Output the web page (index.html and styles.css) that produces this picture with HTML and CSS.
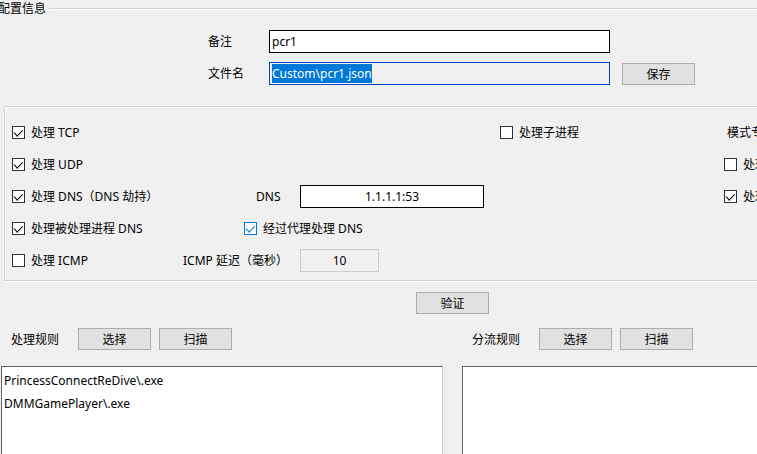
FILE: index.html
```html
<!DOCTYPE html>
<html lang="zh-CN">
<head>
    <meta charset="UTF-8">
    <title>配置信息</title>
    <link rel="stylesheet" href="styles.css">
</head>
<body>
    <!-- 配置信息 -->
    <div class="group-head">
        <span class="group-title">配置信息</span>
        <span class="group-line"></span>
    </div>

    <div class="info-grid">
        <span class="label">备注</span>
        <div class="textbox">pcr1</div>
        <span></span>

        <span class="label">文件名</span>
        <div class="textbox readonly focus"><span class="selected">Custom\pcr1.json</span></div>
        <button class="btn">保存</button>
    </div>

    <!-- 选项 -->
    <div class="options-box">
        <div class="options-grid">
            <label class="check c1"><span class="box on"></span>处理 TCP</label>
            <label class="check c6"><span class="box"></span>处理子进程</label>
            <span class="plain c7 shift">模式专用</span>

            <label class="check c1"><span class="box on"></span>处理 UDP</label>
            <label class="check c7"><span class="box"></span>处理</label>

            <label class="check c1"><span class="box on"></span>处理 DNS（DNS 劫持）</label>
            <span class="plain c4">DNS</span>
            <div class="textbox center c5 dns">1.1.1.1:53</div>
            <label class="check c7"><span class="box on"></span>处理</label>

            <label class="check c1"><span class="box on"></span>处理被处理进程 DNS</label>
            <label class="check c3"><span class="box on blue"></span>经过代理处理 DNS</label>

            <label class="check c1"><span class="box"></span>处理 ICMP</label>
            <span class="plain c2">ICMP 延迟（毫秒）</span>
            <div class="textbox center disabled c5 icmp">10</div>
        </div>
    </div>

    <div class="verify-row">
        <button class="btn">验证</button>
    </div>

    <!-- 规则 -->
    <div class="rules">
        <div class="rule-col">
            <div class="rule-head">
                <span class="rule-label">处理规则</span>
                <button class="btn">选择</button>
                <button class="btn">扫描</button>
            </div>
            <div class="list-box">
                <div class="list-item">PrincessConnectReDive\.exe</div>
                <div class="list-item">DMMGamePlayer\.exe</div>
            </div>
        </div>
        <div class="rule-col right">
            <div class="rule-head">
                <span class="rule-label">分流规则</span>
                <button class="btn">选择</button>
                <button class="btn">扫描</button>
            </div>
            <div class="list-box wide"></div>
        </div>
    </div>
</body>
</html>
```

FILE: styles.css
```css
* {
    margin: 0;
    padding: 0;
    box-sizing: border-box;
}

body {
    font-family: 'Noto Sans', 'Noto Sans CJK SC', sans-serif;
    font-size: 12px;
    color: #000;
    background: #f0f0f0;
    width: 757px;
    height: 454px;
    overflow: hidden;
}

/* 分组标题 */
.group-head {
    display: flex;
    align-items: center;
    height: 17px;
    margin-left: -2px;
}

.group-title {
    line-height: 17px;
    padding-right: 3px;
}

.group-line {
    flex: 1;
    height: 2px;
    margin-top: 1px;
    border-top: 1px solid #d5d5d5;
    border-bottom: 1px solid #fff;
}

.info-grid {
    display: grid;
    grid-template-columns: 49px 341px 73px;
    column-gap: 12px;
    row-gap: 9px;
    align-items: center;
    padding-left: 208px;
    margin-top: 13px;
}

.label {
    line-height: 23px;
}

.textbox {
    height: 23px;
    line-height: 21px;
    padding: 0 2px;
    background: #fff;
    border: 1px solid #000;
    white-space: nowrap;
    overflow: hidden;
}

.textbox.readonly {
    background: #f0f0f0;
}

.textbox.focus {
    border-color: #0046c8;
}

.selected {
    background: #0078d7;
    color: #fff;
    padding: 1px 0;
}

.textbox.center {
    text-align: center;
}

.textbox.disabled {
    background: #f0f0f0;
    border-color: #ccc;
}

.btn {
    font: inherit;
    height: 22px;
    width: 73px;
    background: #e1e1e1;
    border: 1px solid #adadad;
    color: #000;
}

/* 选项区 */
.options-box {
    margin: 21px 0 0 4px;
    width: 800px;
    height: 175px;
    border: 1px solid #d5d5d5;
    box-shadow: inset 1px 1px 0 #fff, 1px 1px 0 #fff;
    padding: 9px 0 0 7px;
}

.options-grid {
    display: grid;
    grid-template-columns: 171px 61px 12px 44px 200px 224px 100px;
    grid-auto-rows: 32px;
    align-items: center;
}

.c1 { grid-column: 1 / 3; }
.c2 { grid-column: 2 / 5; }
.c3 { grid-column: 3 / 6; }
.c4 { grid-column: 4; }
.c5 { grid-column: 5; }
.c6 { grid-column: 6; }
.c7 { grid-column: 7; }

.options-grid > :nth-child(1),
.options-grid > :nth-child(2),
.options-grid > :nth-child(3) { grid-row: 1; }
.options-grid > :nth-child(4),
.options-grid > :nth-child(5) { grid-row: 2; }
.options-grid > :nth-child(6),
.options-grid > :nth-child(7),
.options-grid > :nth-child(8),
.options-grid > :nth-child(9) { grid-row: 3; }
.options-grid > :nth-child(10),
.options-grid > :nth-child(11) { grid-row: 4; }
.options-grid > :nth-child(12),
.options-grid > :nth-child(13),
.options-grid > :nth-child(14) { grid-row: 5; }

.shift {
    padding-left: 3px;
}

.plain {
    white-space: nowrap;
}

.check {
    display: flex;
    align-items: center;
    gap: 6px;
    white-space: nowrap;
}

.box {
    width: 13px;
    height: 13px;
    flex: none;
    border: 1px solid #333;
    background: #fff;
    position: relative;
}

.box.on::after {
    content: '';
    position: absolute;
    left: 2px;
    top: 1px;
    width: 7px;
    height: 4px;
    border-left: 1px solid #000;
    border-bottom: 1px solid #000;
    transform: translate(0, 2px) rotate(-45deg) scaleX(1.05);
    transform-origin: 3px 3px;
}

.box.blue {
    border-color: #0078d7;
}

.box.blue::after {
    border-color: #0078d7;
}

.dns {
    width: 184px;
    height: 23px;
}

.icmp {
    width: 79px;
    height: 23px;
}

.verify-row {
    padding-left: 416px;
    margin-top: 11px;
}

/* 规则区 */
.rules {
    display: grid;
    grid-template-columns: 442px 320px;
    column-gap: 19px;
    margin-top: 14px;
    padding-left: 1px;
}

.rule-head {
    display: flex;
    align-items: center;
    gap: 8px;
    padding-left: 10px;
    height: 22px;
}

.right .rule-head {
    padding-left: 10px;
}

.rule-label {
    width: 59px;
}

.list-box {
    margin-top: 16px;
    height: 120px;
    background: #fff;
    border: 1px solid #646464;
    border-right-color: #c8c8c8;
    border-bottom: none;
    padding: 2px 2px;
}

.list-item {
    height: 23px;
    line-height: 23px;
    white-space: nowrap;
}
```
